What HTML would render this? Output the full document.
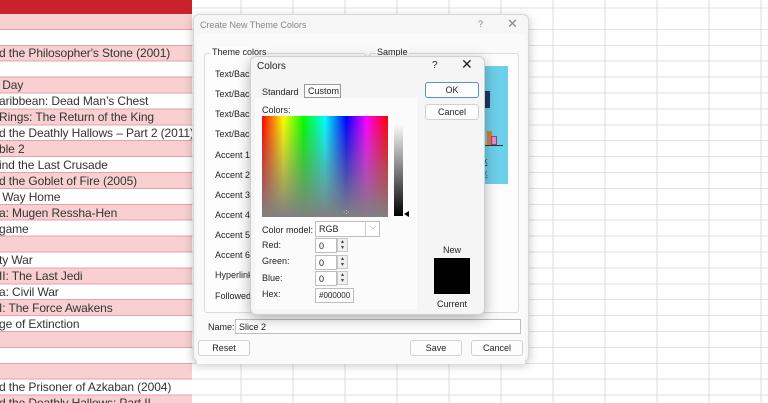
<!DOCTYPE html>
<html><head><meta charset="utf-8"><style>
*{margin:0;padding:0;box-sizing:border-box}
body{width:768px;height:403px;overflow:hidden;background:#fff;position:relative;font-family:"Liberation Sans",sans-serif}
.a{position:absolute}
.grid{left:192px;top:0;width:576px;height:403px;
background-image:repeating-linear-gradient(90deg,transparent 0,transparent 48.5px,#dcdcdc 48.5px,#dcdcdc 49.5px,transparent 49.5px,transparent 52px),
repeating-linear-gradient(180deg,transparent 0,transparent 14.9px,#e2e2e2 14.9px,#e2e2e2 15.9px);background-position:0 0,0 14px}
.left{left:0;top:14px;width:192px;height:389px;
background:repeating-linear-gradient(180deg,#f8d0d2 0,#f8d0d2 14.9px,#e8a0a6 14.9px,#e8a0a6 15.9px,#fff 15.9px,#fff 30.8px,#e8a0a6 30.8px,#e8a0a6 31.8px)}
.hdr{left:0;top:0;width:192px;height:14px;background:#c9222a}
.r{position:absolute;left:-1px;font-size:12px;color:#333;white-space:nowrap;font-family:"Liberation Sans",sans-serif;letter-spacing:-0.1px}
.dlg{left:193px;top:14px;width:336px;height:348px;background:#f6f6f6;border:1px solid #d8d8d8;border-radius:6px;box-shadow:0 3px 10px rgba(0,0,0,.25)}
.t{font-size:9px;color:#222;position:absolute;white-space:nowrap}
.btn{position:absolute;background:#fdfdfd;border:1px solid #d0d0d0;border-radius:3px;font-size:9px;text-align:center;color:#222}
.cd{left:250px;top:56px;width:235px;height:259px;background:#f5f5f5;border:1px solid #cfcfcf;border-radius:6px;box-shadow:0 4px 14px rgba(0,0,0,.3)}
.inp{position:absolute;background:#fff;border:1px solid #bdbdbd;font-size:9px;padding:2px 0 0 3px;color:#222}
.sp{position:absolute;background:#f0f0f0;border:1px solid #c8c8c8;width:11px;height:14px;font-size:6px;line-height:6px;text-align:center;color:#444}
</style></head><body>
<div class="a grid"></div>
<div class="a left"></div>
<div class="a hdr"></div>
<div class="a" style="left:0;top:14px;width:192px;height:389px;overflow:hidden">
<div class="r" style="top:32px">d the Philosopher's Stone (2001)</div>
<div class="r" style="top:64px">&nbsp;Day</div>
<div class="r" style="top:80px">aribbean: Dead Man’s Chest</div>
<div class="r" style="top:96px">Rings: The Return of the King</div>
<div class="r" style="top:112px">d the Deathly Hallows – Part 2 (2011)</div>
<div class="r" style="top:128px">ble 2</div>
<div class="r" style="top:144px">ind the Last Crusade</div>
<div class="r" style="top:160px">d the Goblet of Fire (2005)</div>
<div class="r" style="top:176px">&nbsp;Way Home</div>
<div class="r" style="top:192px">a: Mugen Ressha-Hen</div>
<div class="r" style="top:208px">game</div>
<div class="r" style="top:239px">ty War</div>
<div class="r" style="top:255px">II: The Last Jedi</div>
<div class="r" style="top:271px">a: Civil War</div>
<div class="r" style="top:287px">I: The Force Awakens</div>
<div class="r" style="top:303px">ge of Extinction</div>
<div class="r" style="top:366px">d the Prisoner of Azkaban (2004)</div>
<div class="r" style="top:382px">d the Deathly Hallows: Part II</div>
</div>

<div class="a dlg">
<div class="t" style="left:6px;top:5px;color:#888">Create New Theme Colors</div>
<div class="t" style="left:284px;top:4px;color:#888">?</div>
<div class="t" style="left:313px;top:1px;color:#888;font-size:13px">✕</div>
<div class="a" style="left:3px;top:19px;width:328px;height:330px;background:#fafafa"></div>
<div class="a" style="left:10px;top:38px;width:162px;height:260px;border:1px solid #dcdcdc;border-radius:3px;background:#fdfdfd"></div>
<div class="t" style="left:17px;top:32px;background:#fdfdfd;padding:0 1px">Theme colors</div>
<div class="a" style="left:175px;top:38px;width:150px;height:260px;border:1px solid #dcdcdc;border-radius:3px;background:#fdfdfd"></div>
<div class="t" style="left:182px;top:32px;background:#fdfdfd;padding:0 1px">Sample</div>
<div class="a" style="left:291px;top:51px;width:23px;height:118px;background:#6dd0ea"></div>
<div class="a" style="left:291px;top:76px;width:5px;height:17px;background:#1f3864"></div>
<div class="a" style="left:293px;top:116px;width:5px;height:14px;background:#e07b2d"></div>
<div class="a" style="left:297px;top:121px;width:6px;height:9px;background:#e58bc3;border:1px solid #8a4b7a"></div>
<div class="a" style="left:291px;top:130px;width:18px;height:1px;background:#333"></div>
<div class="t" style="left:284px;top:141px;color:#1a4c8a;text-decoration:underline">nk</div>
<div class="t" style="left:284px;top:153px;color:#4a6ea8;text-decoration:underline">nk</div>
<div class="t" style="left:21px;top:54px">Text/Back</div>
<div class="t" style="left:21px;top:74px">Text/Back</div>
<div class="t" style="left:21px;top:94px">Text/Back</div>
<div class="t" style="left:21px;top:114px">Text/Back</div>
<div class="t" style="left:21px;top:135px">Accent 1</div>
<div class="t" style="left:21px;top:155px">Accent 2</div>
<div class="t" style="left:21px;top:175px">Accent 3</div>
<div class="t" style="left:21px;top:195px">Accent 4</div>
<div class="t" style="left:21px;top:215px">Accent 5</div>
<div class="t" style="left:21px;top:235px">Accent 6</div>
<div class="t" style="left:21px;top:255px">Hyperlink</div>
<div class="t" style="left:21px;top:276px">Followed</div>
<div class="t" style="left:14px;top:307px">Name:</div>
<div class="inp" style="left:41px;top:304px;width:286px;height:15px">Slice 2</div>
<div class="btn" style="left:4px;top:325px;width:52px;height:16px;line-height:14px">Reset</div>
<div class="btn" style="left:216px;top:325px;width:52px;height:16px;line-height:14px">Save</div>
<div class="btn" style="left:277px;top:325px;width:52px;height:16px;line-height:14px">Cancel</div>
</div>

<div class="a cd">
<div class="t" style="left:6px;top:4px;font-size:10px">Colors</div>
<div class="t" style="left:181px;top:3px;font-size:10px">?</div>
<div class="t" style="left:210px;top:-1px;font-size:14px">✕</div>
<div class="a" style="left:4px;top:41px;width:162px;height:211px;background:#fbfbfb"></div>
<div class="t" style="left:11px;top:30px">Standard</div>
<div class="a" style="left:53px;top:27px;width:37px;height:14px;border:1px solid #999;background:#fbfbfb"></div>
<div class="t" style="left:57px;top:29px">Custom</div>
<div class="t" style="left:11px;top:48px">Colors:</div>
<div class="a" style="left:11px;top:59px;width:126px;height:101px;background:linear-gradient(180deg,rgba(128,128,128,0),#808080),linear-gradient(90deg,#f00,#ff0 17%,#0f0 33%,#0ff 50%,#00f 67%,#f0f 83%,#f00)"></div>
<div class="a" style="left:92px;top:152px;color:#fff;font-size:7px">·:·</div>
<div class="a" style="left:143px;top:66px;width:9px;height:93px;background:linear-gradient(#fff,#000)"></div>
<div class="a" style="left:153px;top:154px;width:0;height:0;border-top:3px solid transparent;border-bottom:3px solid transparent;border-right:5px solid #000"></div>
<div class="t" style="left:11px;top:168px">Color model:</div>
<div class="inp" style="left:64px;top:164px;width:65px;height:16px">RGB<span style="position:absolute;left:49px;top:0;width:15px;height:14px;border-left:1px solid #ccc;text-align:center;color:#888;font-size:8px">⌵</span></div>
<div class="t" style="left:11px;top:183px">Red:</div>
<div class="inp" style="left:64px;top:181px;width:22px;height:15px">0</div><div class="sp" style="left:86px;top:181px">▴<br>▾</div>
<div class="t" style="left:11px;top:199px">Green:</div>
<div class="inp" style="left:64px;top:198px;width:22px;height:15px">0</div><div class="sp" style="left:86px;top:198px">▴<br>▾</div>
<div class="t" style="left:11px;top:216px">Blue:</div>
<div class="inp" style="left:64px;top:214px;width:22px;height:15px">0</div><div class="sp" style="left:86px;top:214px">▴<br>▾</div>
<div class="t" style="left:11px;top:232px">Hex:</div>
<div class="inp" style="left:64px;top:231px;width:39px;height:15px;font-size:8px">#000000</div>
<div class="btn" style="left:174px;top:25px;width:54px;height:16px;line-height:14px;border:1px solid #5b8fc7">OK</div>
<div class="btn" style="left:174px;top:47px;width:54px;height:16px;line-height:14px">Cancel</div>
<div class="t" style="left:192px;top:188px">New</div>
<div class="a" style="left:183px;top:201px;width:36px;height:36px;background:#000"></div>
<div class="t" style="left:186px;top:242px">Current</div>
</div>
</body></html>
